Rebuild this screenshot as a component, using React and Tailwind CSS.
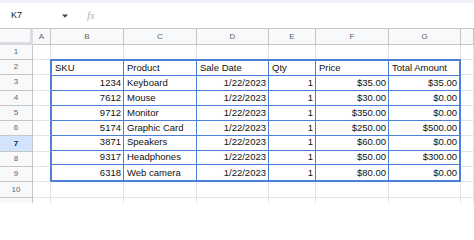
import React from 'react'

const cols = ['A', 'B', 'C', 'D', 'E', 'F', 'G', '']

const data = [
  ['SKU', 'Product', 'Sale Date', 'Qty', 'Price', 'Total Amount'],
  ['1234', 'Keyboard', '1/22/2023', '1', '$35.00', '$35.00'],
  ['7612', 'Mouse', '1/22/2023', '1', '$30.00', '$0.00'],
  ['9712', 'Monitor', '1/22/2023', '1', '$350.00', '$0.00'],
  ['5174', 'Graphic Card', '1/22/2023', '1', '$250.00', '$500.00'],
  ['3871', 'Speakers', '1/22/2023', '1', '$60.00', '$0.00'],
  ['9317', 'Headphones', '1/22/2023', '1', '$50.00', '$300.00'],
  ['6318', 'Web camera', '1/22/2023', '1', '$80.00', '$0.00'],
]

// text columns are left aligned, numbers right aligned
const leftCols = [1]

function RowHead({ n, active }) {
  return (
    <div
      className={
        active
          ? 'flex items-center justify-center border-r border-b border-[#c4c7c5] bg-[#d3e3fd] text-[8px] font-bold text-[#0b1f44]'
          : 'flex items-center justify-center border-r border-b border-[#c4c7c5] bg-[#f8f9fa] text-[8px] text-[#5f6368]'
      }
    >
      {n}
    </div>
  )
}

function Cell({ blueRight, blueBottom }) {
  return (
    <div
      className={[
        'border-r border-b',
        blueRight ? 'border-r-[#4a80d8]' : 'border-r-[#e1e3e6]',
        blueBottom ? 'border-b-[#4a80d8]' : 'border-b-[#e1e3e6]',
      ].join(' ')}
    />
  )
}

export default function App() {
  return (
    <div className="w-[474px] h-[203px] overflow-hidden bg-white font-['Liberation_Sans',Arial,sans-serif]">
      {/* formula bar */}
      <div className="h-[3px] bg-[#eef1f7]" />
      <div className="h-[25px] flex items-center">
        <span className="w-[56px] pl-[11px] text-[9px] text-[#202124]">K7</span>
        <svg width="8" height="8" viewBox="0 0 8 8" className="ml-[5px]">
          <path d="M1 2.5h6L4 5.8z" fill="#444746" />
        </svg>
        <span className="ml-[18px] text-[11px] italic text-[#b0b3b8] font-['Liberation_Serif',serif]">fx</span>
      </div>

      <div className="grid grid-cols-[33px_18px_73px_73px_72px_47px_73px_72px_1fr] grid-rows-[17px_15px_repeat(9,15.3px)_15px]">
        {/* corner */}
        <div className="border-r-[3px] border-b-[3px] border-[#dadce0] bg-[#f8f9fa] border-t border-t-[#c4c7c5]" />
        {cols.map((c, i) => (
          <div
            key={'h' + i}
            className="flex items-center justify-center border-r border-b border-t border-[#c4c7c5] bg-[#f8f9fa] text-[8px] text-[#5f6368]"
          >
            {c}
          </div>
        ))}

        {/* row 1 */}
        <RowHead n={1} />
        {cols.map((c, i) => (
          <Cell key={'r1' + i} blueBottom={i >= 1 && i <= 6} />
        ))}

        {/* data table B2:G9 */}
        <div className="col-start-3 col-span-6 row-start-3 row-span-8 -ml-px -mt-px border-2 border-[#4a80d8] grid grid-cols-[72px_73px_72px_47px_73px_70px] grid-rows-8 text-[9.5px] text-[#111]">
          {data.map((row, r) =>
            row.map((v, c) => {
              const left = r === 0 || leftCols.includes(c)
              return (
                <div
                  key={r + '-' + c}
                  className={[
                    'flex items-center whitespace-nowrap overflow-hidden border-[#4a80d8]',
                    c < 5 ? 'border-r' : '',
                    r < 7 ? 'border-b' : '',
                    left ? 'justify-start pl-[3px]' : 'justify-end pr-[2px]',
                  ].join(' ')}
                >
                  {v}
                </div>
              )
            })
          )}
        </div>

        {/* rows 2-9: row head, A, H */}
        {[2, 3, 4, 5, 6, 7, 8, 9].map((n) => (
          <React.Fragment key={'r' + n}>
            <RowHead n={n} active={n === 7} />
            <Cell blueRight />
            <Cell />
          </React.Fragment>
        ))}

        {/* row 10, then the top of row 11 */}
        <RowHead n={10} />
        {cols.map((c, i) => (
          <Cell key={'r10-' + i} />
        ))}
        <RowHead n="" />
        {cols.map((c, i) => (
          <Cell key={'r11-' + i} />
        ))}
      </div>
    </div>
  )
}
